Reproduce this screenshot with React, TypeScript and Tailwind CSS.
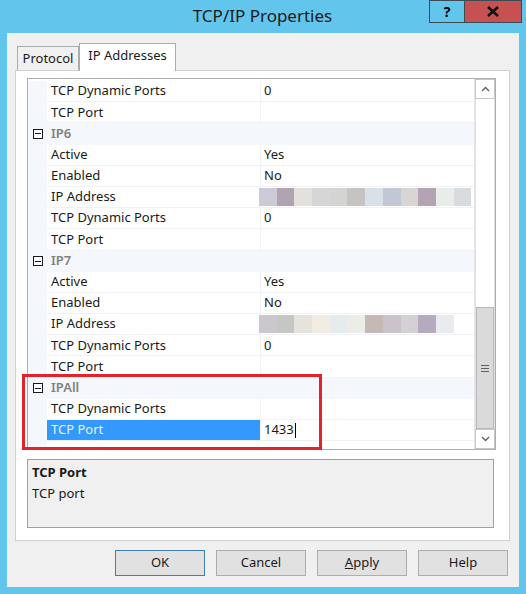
import React from "react";

type Row =
  | { kind: "cat"; label: string }
  | { kind: "prop"; name: string; value?: string; blur?: string[]; selected?: boolean };

const ip6Blur = ["#CCCAD6", "#B1A3B2", "#E3E1DD", "#D6D6D6", "#D4D4D2", "#C6C4C2", "#D8E0E8", "#C2C7D6", "#D9D5D5", "#B4A3B3", "#E9EDEA", "#D7DCE0"];
const ip7Blur = ["#CCC7CC", "#C6C6C4", "#E6E2DC", "#F2ECE2", "#E4ECEE", "#EDEDE8", "#C5B9B6", "#CBC3CB", "#D3D1D3", "#B5ABC1", "#EAEBED"];

const rows: Row[] = [
  { kind: "prop", name: "TCP Dynamic Ports", value: "0" },
  { kind: "prop", name: "TCP Port" },
  { kind: "cat", label: "IP6" },
  { kind: "prop", name: "Active", value: "Yes" },
  { kind: "prop", name: "Enabled", value: "No" },
  { kind: "prop", name: "IP Address", blur: ip6Blur },
  { kind: "prop", name: "TCP Dynamic Ports", value: "0" },
  { kind: "prop", name: "TCP Port" },
  { kind: "cat", label: "IP7" },
  { kind: "prop", name: "Active", value: "Yes" },
  { kind: "prop", name: "Enabled", value: "No" },
  { kind: "prop", name: "IP Address", blur: ip7Blur },
  { kind: "prop", name: "TCP Dynamic Ports", value: "0" },
  { kind: "prop", name: "TCP Port" },
  { kind: "cat", label: "IPAll" },
  { kind: "prop", name: "TCP Dynamic Ports" },
  { kind: "prop", name: "TCP Port", value: "1433", selected: true },
];

function MinusBox() {
  return (
    <div className="w-[10px] h-[10px] border border-[#1a1a1a] bg-white flex items-center justify-center">
      <div className="w-[6px] h-px bg-[#1a1a1a]" />
    </div>
  );
}

function GridRow({ r }: { r: Row }) {
  if (r.kind === "cat") {
    return (
      <div className="flex h-[21.2px] bg-[#F4F7FC]">
        <div className="w-[19px] flex items-center justify-center pl-px">
          <MinusBox />
        </div>
        <div className="flex-1 flex items-center pl-[4px] text-[#808080] font-semibold">{r.label}</div>
      </div>
    );
  }
  return (
    <div className="flex h-[21.2px]">
      <div className="w-[19px] bg-[#F4F7FC]" />
      <div
        className={`w-[214px] flex items-center pl-[4px] border-b border-r border-[#F0F2F5] ${
          r.selected ? "bg-[#3399FF] text-[#EAF3FF]" : "bg-white text-[#1a1a1a]"
        }`}
      >
        {r.name}
      </div>
      <div className="flex-1 flex items-center pl-[3px] border-b border-[#F0F2F5] bg-white text-[#1a1a1a]">
        {r.blur ? (
          <div className="flex h-[18px] -ml-[5px]">
            {r.blur.map((c, i) => (
              <div key={i} className="w-[17.7px] h-full" style={{ background: c }} />
            ))}
          </div>
        ) : (
          <span className="flex items-center">
            {r.value}
            {r.selected && <span className="w-px h-[15px] bg-black ml-px" />}
          </span>
        )}
      </div>
    </div>
  );
}

function Scrollbar() {
  return (
    <div className="w-[21px] flex flex-col border-l border-[#E6E6E6] bg-[#F0F0F0]">
      <div className="h-[20px] bg-white border border-[#C8C8C8] flex items-center justify-center">
        <svg width="9" height="6" viewBox="0 0 9 6">
          <path d="M1 5 L4.5 1.5 L8 5" stroke="#606060" strokeWidth="1.4" fill="none" />
        </svg>
      </div>
      <div className="flex-1 flex flex-col bg-white border-x border-[#E0E0E0]">
        <div className="h-[208px]" />
        <div className="flex-1 bg-[#DADADA] border border-[#B9B9B9] flex items-center justify-center">
          <div className="flex flex-col gap-[2px]">
            <div className="w-[8px] h-px bg-[#606060]" />
            <div className="w-[8px] h-px bg-[#606060]" />
            <div className="w-[8px] h-px bg-[#606060]" />
          </div>
        </div>
      </div>
      <div className="h-[20px] bg-white border border-[#C8C8C8] flex items-center justify-center">
        <svg width="9" height="6" viewBox="0 0 9 6">
          <path d="M1 1 L4.5 4.5 L8 1" stroke="#606060" strokeWidth="1.4" fill="none" />
        </svg>
      </div>
    </div>
  );
}

function Btn({ children, def }: { children: React.ReactNode; def?: boolean }) {
  return (
    <div
      className={`w-[90px] h-[26px] flex items-center justify-center bg-[#E1E1E1] border ${
        def ? "border-[#3C7FB1]" : "border-[#ADADAD]"
      } text-[#1a1a1a]`}
    >
      {children}
    </div>
  );
}

export default function App() {
  return (
    <div
      className="w-[526px] h-[594px] bg-[#62C5EB] flex flex-col text-[13px] overflow-hidden"
      style={{ fontFamily: '"Noto Sans", "Open Sans", sans-serif' }}
    >
      {/* title bar */}
      <div className="h-[33px] flex pl-[96px] pr-[4px]">
        <div className="flex-1 flex items-center justify-center text-[17px] text-[#1a1a1a] pb-[1px]">
          TCP/IP Properties
        </div>
        <div className="flex h-[23px]">
          <div className="w-[35px] border border-[#3b4a55] border-r-0 flex items-center justify-center font-bold text-[14px] text-black">
            ?
          </div>
          <div className="w-[58px] bg-[#C75050] border border-[#3b4a55] flex items-center justify-center">
            <svg width="12" height="11" viewBox="0 0 12 11">
              <path d="M1 1 L11 10 M11 1 L1 10" stroke="#111" strokeWidth="2.6" />
            </svg>
          </div>
        </div>
      </div>

      {/* client */}
      <div className="mx-[7px] h-[554px] bg-[#F0F0F0] flex flex-col">
        {/* tabs */}
        <div className="flex items-end pl-[10px] pt-[10px] h-[37px] relative z-10">
          <div className="w-[62px] h-[24px] border border-b-0 border-[#ACACAC] bg-[#F0F0F0] flex items-center justify-center text-[#1a1a1a]">
            Protocol
          </div>
          <div className="w-[97px] h-[28px] -mb-px border border-b-0 border-[#ACACAC] bg-white flex items-center justify-center pb-[3px] text-[#1a1a1a]">
            IP Addresses
          </div>
        </div>
        {/* tab panel */}
        <div className="ml-[8px] w-[495px] h-[471px] bg-white border border-[#D0D0D0] flex flex-col pl-[11px] pt-[7px]">
          <div className="w-[469px] h-[372px] border border-[#ABADB3] flex relative">
            <div className="flex-1 flex flex-col pt-[2px] bg-white">
              {rows.map((r, i) => (
                <GridRow key={i} r={r} />
              ))}
              <div className="flex flex-1">
                <div className="w-[19px] bg-[#F4F7FC]" />
                <div className="flex-1 bg-white" />
              </div>
            </div>
            <Scrollbar />
            {/* highlight box */}
            <div className="absolute left-[-6px] top-[295px] w-[300px] h-[76px] border-[3px] border-[#E3232B]" />
          </div>
          <div className="mt-[9px] w-[467px] h-[69px] border border-[#A0A0A0] bg-[#F0F0F0] px-[4px] pt-[2px] text-[#1a1a1a]">
            <div className="font-bold leading-[20px]">TCP Port</div>
            <div className="leading-[22px]">TCP port</div>
          </div>
        </div>
        {/* buttons */}
        <div className="flex justify-end gap-[11px] pr-[11px] pt-[9px]">
          <Btn def>OK</Btn>
          <Btn>Cancel</Btn>
          <Btn>
            <span>
              <span className="underline">A</span>pply
            </span>
          </Btn>
          <Btn>Help</Btn>
        </div>
      </div>
    </div>
  );
}
